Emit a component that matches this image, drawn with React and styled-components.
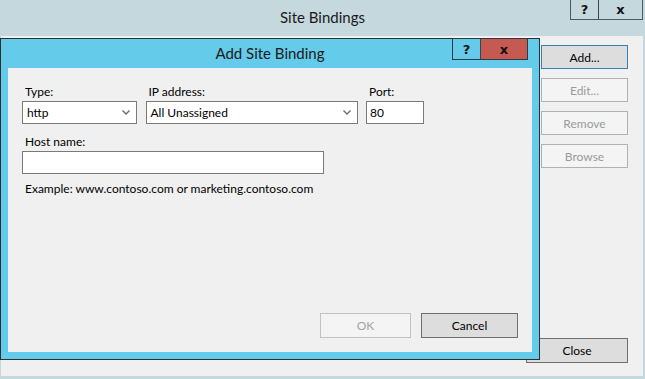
import React from "react";
import styled, { createGlobalStyle, css } from "styled-components";

const GlobalStyle = createGlobalStyle`
  html, body {
    margin: 0;
    padding: 0;
    width: 645px;
    height: 379px;
    overflow: hidden;
    font-family: "Lato", "Noto Sans", sans-serif;
    font-size: 12px;
    color: #000;
  }
  * { box-sizing: border-box; }
`;

const Chevron = () => (
  <svg width="8" height="5" viewBox="0 0 8 5">
    <polyline points="0.5,0.5 4,4 7.5,0.5" fill="none" stroke="#6d6d6d" strokeWidth="1.4" />
  </svg>
);

const App = () => {
  return (
    <Desktop>
      <GlobalStyle />
      <Window>
        <TitleBar>
          <TitleText>Site Bindings</TitleText>
          <CaptionGroup $top={-1} $right={2} $height={21}>
            <CaptionButton $width={27}>?</CaptionButton>
            <CaptionButton $width={44}>x</CaptionButton>
          </CaptionGroup>
        </TitleBar>
        <Client>
          <ListArea />
          <SideColumn>
            <Button $kind="default" $width={87}>Add...</Button>
            <Button $kind="disabled" $width={87}>Edit...</Button>
            <Button $kind="disabled" $width={87}>Remove</Button>
            <Button $kind="disabled" $width={87}>Browse</Button>
            <Spacer />
            <Button $kind="normal" $width={102} $height={25}>Close</Button>
          </SideColumn>
        </Client>
      </Window>

      <Dialog>
        <DialogTitle>
          Add Site Binding
          <CaptionGroup $top={-1} $right={4} $height={22} $dark>
            <CaptionButton $width={27}>?</CaptionButton>
            <CaptionButton $width={47} $red>x</CaptionButton>
          </CaptionGroup>
        </DialogTitle>
        <DialogBody>
          <FieldRow>
            <Field $width={115}>
              <Label>Type:</Label>
              <Select>
                <span>http</span>
                <Chevron />
              </Select>
            </Field>
            <Field $width={212}>
              <Label>IP address:</Label>
              <Select>
                <span>All Unassigned</span>
                <Chevron />
              </Select>
            </Field>
            <Field $width={58}>
              <Label>Port:</Label>
              <TextBox>80</TextBox>
            </Field>
          </FieldRow>
          <HostField>
            <Label>Host name:</Label>
            <TextBox $height={23} />
          </HostField>
          <Hint>Example: www.contoso.com or marketing.contoso.com</Hint>
          <DialogActions>
            <Button $kind="disabledLight" $width={91} $height={25}>OK</Button>
            <Button $kind="normal" $width={97} $height={25}>Cancel</Button>
          </DialogActions>
        </DialogBody>
      </Dialog>
    </Desktop>
  );
};

const Desktop = styled.div`
  position: relative;
  width: 645px;
  height: 379px;
`;

const Window = styled.div`
  width: 645px;
  height: 379px;
  background: #c4d8de;
  display: flex;
  flex-direction: column;
`;

const TitleBar = styled.div`
  position: relative;
  height: 36px;
  flex-shrink: 0;
  text-align: center;
`;

const TitleText = styled.div`
  font-size: 15px;
  line-height: 34px;
  color: #1a1a1a;
`;

const CaptionGroup = styled.div`
  position: absolute;
  top: ${(p) => p.$top}px;
  right: ${(p) => p.$right}px;
  height: ${(p) => p.$height}px;
  display: flex;
  border: 1px solid ${(p) => (p.$dark ? "#2e3a40" : "#4a5a60")};
`;

const CaptionButton = styled.div`
  width: ${(p) => p.$width}px;
  height: 100%;
  display: flex;
  align-items: center;
  justify-content: center;
  font-family: "DejaVu Sans", sans-serif;
  font-weight: bold;
  font-size: 13px;
  color: #111;
  background: ${(p) => (p.$red ? "#c75a50" : "transparent")};
  & + & {
    border-left: 1px solid #3a464c;
  }
`;

const Client = styled.div`
  flex: 1;
  margin: 0 2px 3px 1px;
  background: #f0f0f0;
  display: flex;
  padding: 9px 15px 13px 0;
`;

const ListArea = styled.div`
  flex: 1;
`;

const SideColumn = styled.div`
  display: flex;
  flex-direction: column;
  align-items: flex-end;
  gap: 9px;
`;

const Spacer = styled.div`
  flex: 1;
`;

const buttonKinds = {
  default: css`
    background: #dddddd;
    border-color: #3c7fb1;
    color: #000;
  `,
  normal: css`
    background: #dddddd;
    border-color: #707070;
    color: #000;
  `,
  disabled: css`
    background: #f4f4f4;
    border-color: #adb2b5;
    color: #9a9a9a;
  `,
  disabledLight: css`
    background: #f4f4f4;
    border-color: #c2c2c2;
    color: #a3a3a3;
  `,
};

const Button = styled.div`
  width: ${(p) => p.$width}px;
  height: ${(p) => p.$height || 24}px;
  border: 1px solid;
  display: flex;
  align-items: center;
  justify-content: center;
  font-size: 12px;
  ${(p) => buttonKinds[p.$kind]}
`;

const Dialog = styled.div`
  position: absolute;
  left: 0;
  top: 38px;
  width: 540px;
  height: 322px;
  border: 1px solid #2b2f31;
  background: #65cbea;
  padding: 0 7px 7px 7px;
  display: flex;
  flex-direction: column;
`;

const DialogTitle = styled.div`
  position: relative;
  height: 29px;
  line-height: 29px;
  text-align: center;
  font-size: 15px;
  color: #1a1a1a;
  flex-shrink: 0;
`;

const DialogBody = styled.div`
  flex: 1;
  background: #f0f0f0;
  padding: 16px 14px 14px 14px;
  display: flex;
  flex-direction: column;
`;

const FieldRow = styled.div`
  display: flex;
  gap: 8.5px;
`;

const Field = styled.div`
  width: ${(p) => p.$width}px;
  display: flex;
  flex-direction: column;
`;

const Label = styled.div`
  line-height: 16px;
  margin: 0 0 1px 3px;
`;

const Select = styled.div`
  height: 23px;
  border: 1px solid #7a7a7a;
  background: #fff;
  display: flex;
  align-items: center;
  justify-content: space-between;
  padding: 0 6px 0 4px;
`;

const TextBox = styled.div`
  height: ${(p) => p.$height || 23}px;
  border: 1px solid #7a7a7a;
  background: #fff;
  display: flex;
  align-items: center;
  padding: 0 3px;
`;

const HostField = styled.div`
  width: 302px;
  margin-top: 10px;
  display: flex;
  flex-direction: column;
`;

const Hint = styled.div`
  margin: 7px 0 0 3px;
  line-height: 16px;
`;

const DialogActions = styled.div`
  margin-top: auto;
  display: flex;
  justify-content: flex-end;
  gap: 10px;
`;

export default App;
